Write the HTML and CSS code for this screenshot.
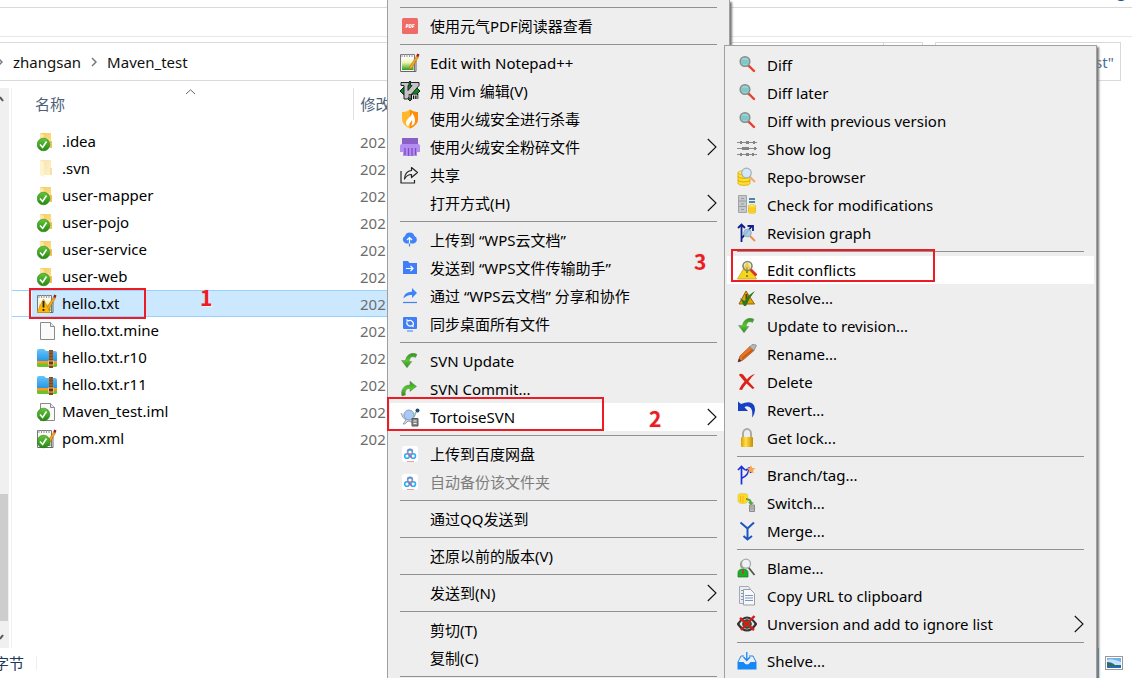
FILE: index.html
```html
<!DOCTYPE html>
<html lang="zh-CN">
<head>
    <meta charset="UTF-8">
    <meta name="viewport" content="width=device-width, initial-scale=1.0">
    <title>Maven_test</title>
    <link rel="stylesheet" href="styles.css">
</head>
<body>
    <!-- 公用图标 -->
    <svg class="sprite" aria-hidden="true">
        <defs>
            <linearGradient id="g-green" x1="0" y1="0" x2="0" y2="1">
                <stop offset="0" stop-color="#63c63c"/><stop offset="1" stop-color="#258a10"/>
            </linearGradient>
            <linearGradient id="g-folder" x1="0" y1="0" x2="1" y2="1">
                <stop offset="0" stop-color="#f0cb62"/><stop offset="1" stop-color="#ffe28e"/>
            </linearGradient>
            <linearGradient id="g-zip" x1="0" y1="0" x2="0" y2="1">
                <stop offset="0" stop-color="#64c6fa"/><stop offset="1" stop-color="#1e8fe0"/>
            </linearGradient>
            <linearGradient id="g-arrow" x1="0" y1="0" x2="0" y2="1">
                <stop offset="0" stop-color="#2f9a18"/><stop offset="0.5" stop-color="#4fcb2a"/><stop offset="1" stop-color="#2f8a1c"/>
            </linearGradient>
            <linearGradient id="g-note" x1="0" y1="0" x2="0" y2="1">
                <stop offset="0" stop-color="#ffffff"/><stop offset="0.4" stop-color="#eef5b0"/><stop offset="1" stop-color="#2d9d1c"/>
            </linearGradient>
            <linearGradient id="g-gold" x1="0" y1="0" x2="1" y2="0">
                <stop offset="0" stop-color="#d99e00"/><stop offset="0.4" stop-color="#ffe04a"/><stop offset="1" stop-color="#c98c00"/>
            </linearGradient>
        </defs>
        <symbol id="i-check" viewBox="0 0 20 20">
            <circle cx="6.500" cy="12.500" r="6.300" fill="url(#g-green)" stroke="#2a7d18" stroke-width="0.600"/>
            <path d="M3 12.500l2.600 3L9.500 9.500" fill="none" stroke="#fff" stroke-width="1.600"/>
        </symbol>
        <symbol id="i-folder" viewBox="0 0 20 20">
            <path d="M3 1h11v15H3z" fill="url(#g-folder)"/>
            <path d="M3 1l4 2v15l-4-2z" fill="#ffe79f"/>
            <path d="M13 9h2v7h-2z" fill="#e8c25a"/>
        </symbol>
        <symbol id="i-page" viewBox="0 0 20 20">
            <path d="M3.500 1.500h10l4 4v13h-14z" fill="#fafafa" stroke="#8a8a8a"/>
            <path d="M13.500 1.500v4h4" fill="#ececec" stroke="#8a8a8a"/>
        </symbol>
        <symbol id="i-zip" viewBox="0 0 20 20">
            <path d="M0 3q0-2 2-2h5l2 2h9q2 0 2 2v10H0z" fill="url(#g-zip)"/>
            <path d="M0 13h20v3H0z" fill="#ff9a1f"/>
            <path d="M0 15.500h20v2q0 1.500-1.500 1.500h-17Q0 19 0 17.500z" fill="#6cc22b"/>
            <path d="M12 2h4v18h-4z" fill="#8a4616"/>
            <path d="M12 4h4M12 7h4M12 10h4" stroke="#b56a2b"/>
            <rect x="11.500" y="13" width="5" height="4" fill="#6d3510" stroke="#f2c27a"/>
        </symbol>
        <symbol id="i-notepad" viewBox="0 0 20 20">
            <path d="M0.500 1.500h14v17H0.500z" fill="#f4f4f4" stroke="#777"/>
            <path d="M2 4.500h11.500V17H2z" fill="url(#g-note)"/>
            <path d="M2 1v3M4.500 1v3M7 1v3M9.500 1v3M12 1v3" stroke="#999"/>
            <path d="M16.500 3l2 1-6.500 11-2.500 1.500.3-2.800z" fill="#f6a81c" stroke="#a86708" stroke-width="0.500"/>
            <path d="M17.200 0.500l2.300 1-1 2.500-2.200-1z" fill="#9e1c1c"/>
            <path d="M1 18.500h15V8" fill="none" stroke="#666"/>
        </symbol>
        <symbol id="i-warn" viewBox="0 0 20 20">
            <path d="M6.500 5L13 18.500H0z" fill="#ffb70a" stroke="#e88b00" stroke-width="0.700"/>
            <path d="M6.500 7v6.500M6.500 15v2" stroke="#222" stroke-width="1.800"/>
        </symbol>
        <symbol id="i-diff" viewBox="0 0 20 20">
            <path d="M12 11l5 5" stroke="#f03c28" stroke-width="2.400" stroke-linecap="round"/>
            <path d="M10 10l2 2" stroke="#777" stroke-width="1.500"/>
            <circle cx="8" cy="6.500" r="4.800" fill="#8fd5d3" stroke="#8b8b8b" stroke-width="1.500"/>
            <path d="M4.500 6h7M4.500 8h7" stroke="#6fb3b1" stroke-width="0.800"/>
        </symbol>
        <symbol id="i-update" viewBox="0 0 20 20">
            <path d="M17 3.500C13.500 1 6.500 2.500 5.500 9.500H1.500L7 16.800l4.800-6.300H9.200C9.500 6.500 12 4.500 15.500 6.500z" fill="url(#g-arrow)" stroke="#777" stroke-width="0.500"/>
        </symbol>
        <symbol id="i-commit" viewBox="0 0 20 20">
            <path d="M2 17c-1.500-5 1-11 8-11V2.200l6.500 5.200-6.500 5V9.500C6.500 9 4.500 12 5.500 16z" fill="url(#g-arrow)" stroke="#777" stroke-width="0.500"/>
        </symbol>
        <symbol id="i-baidu" viewBox="0 0 20 20">
            <rect x="2" y="2" width="16" height="16" rx="3" fill="#fff"/>
            <circle cx="10" cy="7.800" r="2.400" fill="none" stroke="#f0708a" stroke-width="1.600"/>
            <path d="M7.600 7.400A2.500 2.500 0 0 1 12.400 7.400" fill="none" stroke="#2ba8ee" stroke-width="1.600"/>
            <circle cx="7" cy="12" r="2.300" fill="none" stroke="#25b1f5" stroke-width="1.600"/>
            <circle cx="13.200" cy="12" r="2.300" fill="none" stroke="#25b1f5" stroke-width="1.600"/>
            <path d="M8.800 10.400l2.600 3" stroke="#e0507a" stroke-width="1.500"/>
            <path d="M7 17.500h7" stroke="#f59aa5"/>
        </symbol>
        <symbol id="i-db" viewBox="0 0 10 12">
            <path d="M0.500 2v8c0 2 9 2 9 0V2z" fill="#ffe02e" stroke="#d9a400" stroke-width="0.600"/>
            <ellipse cx="5" cy="2" rx="4.500" ry="1.500" fill="#fff07a" stroke="#d9a400" stroke-width="0.600"/>
            <path d="M0.500 4.700c0 2 9 2 9 0M0.500 7.400c0 2 9 2 9 0" fill="none" stroke="#d9a400" stroke-width="0.700"/>
        </symbol>
        <symbol id="i-more" viewBox="0 0 10 18">
            <path d="M0.800 1L9 9l-8.200 8" fill="none" stroke="#111" stroke-width="1.100"/>
        </symbol>
    </svg>

    <div class="explorer">
        <div class="titlebar"><span class="help-dot"></span></div>
        <div class="ribbon"></div>

        <div class="toolbar">
            <nav class="address">
                <svg class="crumb-arrow" viewBox="0 0 6 10"><path d="M1 1l4 4-4 4" fill="none" stroke="#777" stroke-width="1.500"/></svg>
                <a href="#">zhangsan</a>
                <svg class="crumb-arrow" viewBox="0 0 6 10"><path d="M1 1l4 4-4 4" fill="none" stroke="#777" stroke-width="1.500"/></svg>
                <a href="#">Maven_test</a>
                <span class="address-drop"></span>
            </nav>
            <input class="search" type="text" aria-label="搜索" value='st"'>
        </div>

        <main class="content">
            <div class="scrollbar">
                <svg class="scroll-arrow" viewBox="0 0 4 6"><path d="M0 1l3 4" stroke="#555" stroke-width="2"/></svg>
                <span class="scroll-thumb"></span>
                <svg class="scroll-arrow" viewBox="0 0 4 6"><path d="M0 5l3-4" stroke="#555" stroke-width="2"/></svg>
            </div>
            <div class="files">
                <svg class="sort-mark" viewBox="0 0 10 6"><path d="M0.500 5L5 0.800 9.500 5" fill="none" stroke="#666"/></svg>
                <table>
                    <thead>
                        <tr><th class="name">名称</th><th class="date">修改</th></tr>
                    </thead>
                    <tbody>
                        <tr><td class="name"><svg class="icon"><use href="#i-folder"/><use href="#i-check"/></svg>.idea</td><td>202</td></tr>
                        <tr><td class="name"><svg class="icon faded"><use href="#i-folder"/></svg>.svn</td><td>202</td></tr>
                        <tr><td class="name"><svg class="icon"><use href="#i-folder"/><use href="#i-check"/></svg>user-mapper</td><td>202</td></tr>
                        <tr><td class="name"><svg class="icon"><use href="#i-folder"/><use href="#i-check"/></svg>user-pojo</td><td>202</td></tr>
                        <tr><td class="name"><svg class="icon"><use href="#i-folder"/><use href="#i-check"/></svg>user-service</td><td>202</td></tr>
                        <tr><td class="name"><svg class="icon"><use href="#i-folder"/><use href="#i-check"/></svg>user-web</td><td>202</td></tr>
                        <tr class="selected"><td class="name"><svg class="icon"><use href="#i-notepad"/><use href="#i-warn"/></svg>hello.txt</td><td>202</td></tr>
                        <tr><td class="name"><svg class="icon"><use href="#i-page"/></svg>hello.txt.mine</td><td>202</td></tr>
                        <tr><td class="name"><svg class="icon"><use href="#i-zip"/></svg>hello.txt.r10</td><td>202</td></tr>
                        <tr><td class="name"><svg class="icon"><use href="#i-zip"/></svg>hello.txt.r11</td><td>202</td></tr>
                        <tr><td class="name"><svg class="icon"><use href="#i-page"/><use href="#i-check"/></svg>Maven_test.iml</td><td>202</td></tr>
                        <tr><td class="name"><svg class="icon"><use href="#i-notepad"/><use href="#i-check"/></svg>pom.xml</td><td>202</td></tr>
                    </tbody>
                </table>
            </div>
        </main>

        <footer class="statusbar">
            <span class="size">字节</span>
            <span class="view-details"></span>
            <svg class="view-thumb" viewBox="0 0 18 14">
                <rect x="0.500" y="0.500" width="17" height="13" fill="#fff" stroke="#999"/>
                <path d="M2 2h14v10H2z" fill="#6fb0ee"/>
                <path d="M2 4q4-2 14 2v3H2z" fill="#c6e2fa"/>
                <path d="M2 6q5 0 8 3h6v3H2z" fill="#2d6b6d"/>
                <path d="M2 10h14v2H2z" fill="#2568b4"/>
            </svg>
        </footer>
    </div>

    <!-- 右键菜单 -->
    <ul class="menu context-menu">
        <li class="separator"></li>
        <li><button><svg class="icon" viewBox="0 0 20 20"><rect x="2" y="2" width="16" height="16" rx="1.500" fill="#ee6b67"/><text x="10" y="12" class="pdf-mark">PDF</text></svg>使用元气PDF阅读器查看</button></li>
        <li class="separator"></li>
        <li><button><svg class="icon"><use href="#i-notepad"/></svg>Edit with Notepad++</button></li>
        <li><button><svg class="icon" viewBox="0 0 20 20">
            <path d="M10 0l10 10-10 10L0 10z" fill="#0a8a1a" stroke="#123"/>
            <path d="M1 1.500h8v3H8v5l4-5h-1.500v-3H19v3L7.500 18H4V4.500H1z" fill="#c4c4c4" stroke="#222"/>
            <path d="M10 13v5M12.500 18v-4l2 0v4m0-4h2.500v4" fill="none" stroke="#111" stroke-width="2.600"/>
            <path d="M10 13.500v4M12.500 18v-4h4.500v4M14.700 14v4" fill="none" stroke="#ddd"/>
        </svg>用 Vim 编辑(V)</button></li>
        <li><button><svg class="icon" viewBox="0 0 20 20">
            <path d="M10 0.500q4 3 8 2.500v7q0 6-8 9.500-8-3.500-8-9.500V3q4 .5 8-2.500z" fill="#ffb82b"/>
            <path d="M10 0.500q4 3 8 2.500v7q0 6-8 9.500z" fill="#ff8d0a"/>
            <path d="M12 3.500c.5 4-6 6-6 10.500 0 1.500 1 3 2.500 3.500-.3-3 3-3.500 3-6.500 1.500 2 .5 4-.5 6 5-1.500 5.500-7 1-13.500z" fill="#fff"/>
        </svg>使用火绒安全进行杀毒</button></li>
        <li><button><svg class="icon" viewBox="0 0 20 20">
            <path d="M2 1h16v7H2z" fill="#8a60c8"/>
            <path d="M2 7h16q2 0 2 2v6H0V9q0-2 2-2z" fill="#b48df0"/>
            <path d="M3 10h14v9H3z" fill="#b48df0"/>
            <path d="M5 11v7M8.500 11v8M12 11v8M15.500 11v7" stroke="#7c4fc0" stroke-width="1.300"/>
        </svg>使用火绒安全粉碎文件<svg class="more"><use href="#i-more"/></svg></button></li>
        <li><button><svg class="icon" viewBox="0 0 20 20"><path d="M1 6v12h13.500v-3M11.500 2.500l6 5-6 5V9.500q-4.500 0-7 4.500.5-8 7-8.500z" fill="none" stroke="#222" stroke-width="1.200" stroke-linejoin="round"/></svg>共享</button></li>
        <li><button><span class="icon"></span>打开方式(H)<svg class="more"><use href="#i-more"/></svg></button></li>
        <li class="separator"></li>
        <li><button><svg class="icon" viewBox="0 0 20 20"><path d="M6 13.500a4 4 0 0 1-1-7.500 5 5 0 0 1 9.500 0 4 4 0 0 1-.5 7.500z" fill="#3f83f8"/><path d="M9.500 14V8M7 10l2.500-2.500L12 10" fill="none" stroke="#fff" stroke-width="1.200"/><path d="M9.500 13.500v3" stroke="#3f83f8" stroke-width="1.200"/></svg>上传到 “WPS云文档”</button></li>
        <li><button><svg class="icon" viewBox="0 0 20 20"><path d="M3 3h5l1.500 2H17v11H3z" fill="#3f7ef7"/><path d="M6 10.500h7M10.500 8l2.500 2.500-2.500 2.500" fill="none" stroke="#fff" stroke-width="1.200"/></svg>发送到 “WPS文件传输助手”</button></li>
        <li><button><svg class="icon" viewBox="0 0 20 20"><path d="M3.500 12.500q.5-6.500 8.500-7V2l5 5-5 5V9q-5-.5-8.500 3.500z" fill="#3f83f8"/><path d="M3 16.500h14" stroke="#3f83f8" stroke-width="1.200"/></svg>通过 “WPS云文档” 分享和协作</button></li>
        <li><button><svg class="icon" viewBox="0 0 20 20"><rect x="3" y="3" width="14" height="12" rx="1" fill="#3f7ef7"/><path d="M7 17h6" stroke="#3f7ef7"/><path d="M6.500 5.500L8 7a3.500 3.500 0 0 1 5 4.500M6.900 7.500A3.500 3.500 0 0 0 12 11.500l1.500 1.500" fill="none" stroke="#fff" stroke-width="1.200"/></svg>同步桌面所有文件</button></li>
        <li class="separator"></li>
        <li><button><svg class="icon"><use href="#i-update"/></svg>SVN Update</button></li>
        <li><button><svg class="icon"><use href="#i-commit"/></svg>SVN Commit...</button></li>
        <li><button class="active"><svg class="icon" viewBox="0 0 20 20">
            <path d="M1 6q1 5 5 7l-3 4h2l3-3 6 2 2-5" fill="#d3dbe4" stroke="#8292a3" stroke-width="0.800"/>
            <circle cx="9" cy="8" r="5" fill="#a9c8f5" stroke="#7893c0" stroke-width="0.800"/>
            <path d="M14 10l2-5" stroke="#8ba" stroke-width="1.500"/>
            <circle cx="17.500" cy="3.500" r="2" fill="#244a70"/>
            <path d="M12 11.500h6v7.500h-6z" fill="#888" stroke="#555"/>
            <path d="M13.500 14h3M13.500 16.500h3" stroke="#eee"/>
        </svg>TortoiseSVN<svg class="more"><use href="#i-more"/></svg></button></li>
        <li class="separator"></li>
        <li><button><svg class="icon"><use href="#i-baidu"/></svg>上传到百度网盘</button></li>
        <li><button disabled><svg class="icon"><use href="#i-baidu"/></svg>自动备份该文件夹</button></li>
        <li class="separator"></li>
        <li><button><span class="icon"></span>通过QQ发送到</button></li>
        <li class="separator"></li>
        <li><button><span class="icon"></span>还原以前的版本(V)</button></li>
        <li class="separator"></li>
        <li><button><span class="icon"></span>发送到(N)<svg class="more"><use href="#i-more"/></svg></button></li>
        <li class="separator"></li>
        <li><button><span class="icon"></span>剪切(T)</button></li>
        <li><button><span class="icon"></span>复制(C)</button></li>
        <li class="separator"></li>
    </ul>

    <!-- TortoiseSVN 子菜单 -->
    <ul class="menu submenu">
        <li><button><svg class="icon"><use href="#i-diff"/></svg>Diff</button></li>
        <li><button><svg class="icon"><use href="#i-diff"/></svg>Diff later</button></li>
        <li><button><svg class="icon"><use href="#i-diff"/></svg>Diff with previous version</button></li>
        <li><button><svg class="icon" viewBox="0 0 20 20">
            <path d="M0 3.500h20M0 9.500h20M0 15.500h20" stroke="#8b8b8b"/>
            <path d="M3 3.500h2M9 3.500h3M16 3.500h2M5 9.500h7M17 9.500h2M3 15.500h2M9 15.500h3M15 15.500h2" stroke="#858585" stroke-width="3"/>
        </svg>Show log</button></li>
        <li><button><svg class="icon" viewBox="0 0 20 20">
            <use href="#i-db" x="0" y="3" width="14" height="16"/>
            <path d="M12 9l6 6" stroke="#e8ad78" stroke-width="2.200"/>
            <circle cx="9.500" cy="6" r="4.800" fill="#d4e8fa" stroke="#a5afb8" stroke-width="1.200"/>
        </svg>Repo-browser</button></li>
        <li><button><svg class="icon" viewBox="0 0 20 20">
            <path d="M1.500 0.500h8v17h-8z" fill="#c4c8ca" stroke="#a0a4a6"/>
            <path d="M2 6h7M2 11.500h7M4 3.500h3M4 9h3M4 14.500h3" stroke="#959b9e"/>
            <path d="M12 4h6M12 7h6" stroke="#17648c" stroke-width="1.600"/>
            <use href="#i-db" x="11" y="9" width="8" height="10"/>
        </svg>Check for modifications</button></li>
        <li><button><svg class="icon" viewBox="0 0 20 20">
            <path d="M4.500 19V2M1 5l3.500-3.500L8 5M5 15l10-12M10.500 3H16v5" fill="none" stroke="#10208c" stroke-width="1.800"/>
            <path d="M13 13l5 5" stroke="#f08c45" stroke-width="2"/>
            <circle cx="10.500" cy="10" r="3.800" fill="#9cc9ec" fill-opacity="0.900" stroke="#9aa"/>
        </svg>Revision graph</button></li>
        <li class="separator"></li>
        <li><button class="active"><svg class="icon" viewBox="0 0 20 20">
            <path d="M10 3l9.500 16H0.500z" fill="#f6d51c" stroke="#c9a514" stroke-width="0.800"/>
            <path d="M10 7v6M10 15v2" stroke="#8a7d20" stroke-width="1.800"/>
            <path d="M13.500 9.500l6 6" stroke="#e0302a" stroke-width="2.800"/>
            <circle cx="10.500" cy="6" r="4.500" fill="#e6db7a" fill-opacity="0.500" stroke="#858570" stroke-width="1.600"/>
        </svg>Edit conflicts</button></li>
        <li><button><svg class="icon" viewBox="0 0 20 20">
            <path d="M9 3l8.500 13H2z" fill="#e9a30a" stroke="#8c660e"/>
            <path d="M9.500 6v5" stroke="#5c3d08" stroke-width="2"/>
            <path d="M3 10l4.500 3Q11 7 18 3 12 10 9 18H7z" fill="#2d7a1c"/>
        </svg>Resolve...</button></li>
        <li><button><svg class="icon"><use href="#i-update"/></svg>Update to revision...</button></li>
        <li><button><svg class="icon" viewBox="0 0 20 20">
            <path d="M1 18l2-6L13 2.500l4 4L6 16z" fill="#ee7424" stroke="#a04c14" stroke-width="0.700"/>
            <path d="M5 14.500L16 5.500" stroke="#b85a14" stroke-width="1.600"/>
            <path d="M12.500 3l2.500-2.500q3-1 4.500 1L17 6.500z" fill="#b5b5b5" stroke="#777" stroke-width="0.600"/>
            <path d="M1 18l1-3.500L4.500 17z" fill="#335"/>
        </svg>Rename...</button></li>
        <li><button><svg class="icon" viewBox="0 0 20 20">
            <path d="M2 3q1-2 4-.5l4 5Q13 3 18 2q-4 3-6.500 7.500L17.500 16l-2 1-6-5.500Q6.500 15 5 18l-3-.5Q4 13 7.500 9.500z" fill="#dd2317"/>
        </svg>Delete</button></li>
        <li><button><svg class="icon" viewBox="0 0 20 20">
            <path d="M1 1.500l3 2.500Q17-1 18 9q0 5-3 8.500 1.500-10-4-11-2-.5-3.500.8L11 11H1z" fill="#173fc4"/>
        </svg>Revert...</button></li>
        <li><button><svg class="icon" viewBox="0 0 20 20">
            <path d="M6 10V5.500a4 4.500 0 0 1 8 0V10" fill="none" stroke="#aaa" stroke-width="2"/>
            <rect x="4" y="9" width="12" height="10" rx="1" fill="url(#g-gold)"/>
        </svg>Get lock...</button></li>
        <li class="separator"></li>
        <li><button><svg class="icon" viewBox="0 0 20 20">
            <path d="M4.500 19.500V2M1 5l3.500-3.500L8 5M5 13q6-2 7-9M8.500 5.500L12 3l2 5" fill="none" stroke="#1c2fe0" stroke-width="1.700"/>
            <path d="M14 0l1.200 3 3.300.3-2.500 2 .8 3.200L14 6.800l-2.800 1.700.8-3.200-2.500-2 3.300-.3z" fill="#f7a64a"/>
        </svg>Branch/tag...</button></li>
        <li><button><svg class="icon" viewBox="0 0 20 20">
            <path d="M1 2q0-1.500 5-1.500T10.500 2v6.500Q10 10.500 6 10.500T1 8.500z" fill="#ffdc1a" stroke="#d9c56a" stroke-width="0.700"/>
            <path d="M3.500 3v6M6 3v7" stroke="#ffac2e"/>
            <path d="M9 6q5 0 5 5" fill="none" stroke="#55a53a" stroke-width="2.200"/>
            <path d="M11 9l6 .5-3 3z" fill="#55a53a"/>
            <path d="M12.500 12h5v6.500h-5z" fill="#c2c2c2" stroke="#8b8b8b"/>
            <path d="M13 14h4M13 16h4" stroke="#888" stroke-width="0.700"/>
        </svg>Switch...</button></li>
        <li><button><svg class="icon" viewBox="0 0 20 20">
            <path d="M3.500 1.500l7 6v10.500M17 1.500l-6.500 6M6.500 15l4 3.500 4.500-3.500" fill="none" stroke="#1d56c0" stroke-width="2"/>
        </svg>Merge...</button></li>
        <li class="separator"></li>
        <li><button><svg class="icon" viewBox="0 0 20 20">
            <path d="M1 19v-4q0-4 5-4t5 4v4z" fill="#1fae28" stroke="#137a18" stroke-width="0.700"/>
            <path d="M6 12v4" stroke="#c33" stroke-width="1.500"/>
            <path d="M3 6.500Q3 2 7 2v9q-4-.5-4-4.500z" fill="#8f9b7f"/>
            <path d="M11.500 9.500l6 7.500" stroke="#555" stroke-width="1.800"/>
            <circle cx="9" cy="5.700" r="4.500" fill="#f0f2f3" stroke="#a3a9ad" stroke-width="1.300"/>
        </svg>Blame...</button></li>
        <li><button><svg class="icon" viewBox="0 0 20 20">
            <path d="M2.500 0.500h9l2 3v14h-11z" fill="#e9ecf0" stroke="#a5aab1"/>
            <path d="M6.500 3.500h7l4 4v11.500h-11z" fill="#f8f9fb" stroke="#999fa8"/>
            <path d="M4 4.500h2M4 7.500h2M4 10.500h2M4 13.500h2M8 9.500h8M8 12h8M8 14.500h8" stroke="#7c96c4"/>
        </svg>Copy URL to clipboard</button></li>
        <li><button><svg class="icon" viewBox="0 0 20 20">
            <path d="M1 10q9-13 18 0-9 13-18 0z" fill="#e8e8e8" stroke="#333" stroke-width="2.200"/>
            <circle cx="10" cy="10" r="4.200" fill="#2c7d35" stroke="#222"/>
            <path d="M3 4l14 12M17.500 2L4 16" stroke="#d41c1c" stroke-width="2.500"/>
        </svg>Unversion and add to ignore list<svg class="more"><use href="#i-more"/></svg></button></li>
        <li class="separator"></li>
        <li><button><svg class="icon" viewBox="0 0 20 20">
            <path d="M1 11l3-6h3M12 5h4l3 6" fill="none" stroke="#1e86f0"/>
            <path d="M0.500 11h6q3.500 5 7 0h6v7.500H0.500z" fill="#1787f5"/>
            <path d="M9.800 1v8M6.500 6l3.300 3.500L13 6" fill="none" stroke="#1787f5" stroke-width="1.300"/>
        </svg>Shelve...</button></li>
    </ul>

    <!-- 步骤标注 -->
    <span class="frame frame-1"></span>
    <span class="frame frame-2"></span>
    <span class="frame frame-3"></span>
    <strong class="step step-1">1</strong>
    <strong class="step step-2">2</strong>
    <strong class="step step-3">3</strong>
</body>
</html>
```

FILE: styles.css
```css
* {
    box-sizing: border-box;
}

body {
    margin: 0;
    height: 100vh;
    position: relative;
    overflow: hidden;
    background: #fff;
    color: #000;
    font-family: "Noto Sans", "Noto Sans CJK SC", sans-serif;
    font-size: 15px;
    line-height: 20px;
}

button,
input {
    font: inherit;
}

.sprite {
    position: absolute;
    width: 0;
    height: 0;
}

.icon {
    flex: none;
    width: 20px;
    height: 20px;
}

/* 资源管理器窗口 */
.explorer {
    height: 100%;
    display: flex;
    flex-direction: column;
}

.titlebar {
    position: relative;
    height: 8px;
    border-bottom: 1px solid #d9d9d9;
}

.help-dot {
    position: absolute;
    top: -13px;
    right: 4px;
    width: 14px;
    height: 14px;
    border-radius: 50%;
    background: #0f4a8a;
}

.ribbon {
    height: 29px;
    border-bottom: 1px solid #e8e8e8;
}

.toolbar {
    display: flex;
    gap: 12px;
    padding: 5px 11px 7px 0;
}

.address {
    flex: 1;
    display: flex;
    align-items: center;
    gap: 10px;
    height: 39px;
    border: 1px solid #d9d9d9;
    border-left: 0;
}

.address a {
    color: #111;
    text-decoration: none;
}

.crumb-arrow {
    width: 6px;
    height: 10px;
}

.crumb-arrow:first-child {
    margin-left: -3px;
}

.address-drop {
    align-self: stretch;
    width: 39px;
    margin-left: auto;
    border-left: 1px solid #d9d9d9;
}

.search {
    width: 186px;
    padding: 0 6px;
    border: 1px solid #d9d9d9;
    border-radius: 0;
    background: #fff;
    color: #4a6f98;
    text-align: right;
}

.content {
    flex: 1;
    display: flex;
    min-height: 0;
}

.scrollbar {
    width: 9px;
    display: flex;
    flex-direction: column;
    padding: 8px 0;
    background: #f0f0f0;
}

.scroll-arrow {
    width: 4px;
    height: 6px;
}

.scroll-thumb {
    width: 8px;
    height: 127px;
    margin: auto 0 13px;
    background: #cdcdcd;
}

.files {
    position: relative;
    flex: 1;
    margin-left: 2px;
    border-left: 1px solid #f0f0f0;
}

.sort-mark {
    position: absolute;
    top: 1px;
    left: 173px;
    width: 11px;
    height: 6px;
}

table {
    width: 720px;
    border-collapse: collapse;
    table-layout: fixed;
}

th,
td {
    padding: 0 0 0 7px;
    text-align: left;
    font-weight: normal;
}

th {
    height: 32px;
    color: #4c607a;
}

th.name {
    width: 341px;
    padding-left: 23px;
    border-right: 1px solid #e0e0e0;
}

thead::after {
    content: "";
    display: block;
    height: 8px;
}

td {
    height: 27px;
    color: #6d6d6d;
}

td.name {
    padding-left: 25px;
    color: #000;
}

td .icon {
    margin-right: 5px;
    vertical-align: -5px;
}

.faded {
    opacity: 0.5;
}

.selected {
    background: linear-gradient(#cce8ff, #cce8ff) 20px 0 no-repeat;
    box-shadow: inset 0 1px #99d1ff, inset 0 -1px #99d1ff;
}

.statusbar {
    display: flex;
    align-items: center;
    height: 30px;
    padding-right: 9px;
}

.size {
    height: 14px;
    width: 43px;
    margin-left: -6px;
    line-height: 14px;
    color: #1e395b;
    border-right: 1px solid #eee;
}

.view-details {
    align-self: stretch;
    width: 30px;
    margin-left: auto;
    margin-right: 6px;
    border: 1px solid #26a0da;
    background: #cbe8f6;
}

.view-thumb {
    width: 18px;
    height: 14px;
}

/* 菜单 */
.menu {
    position: absolute;
    bottom: 0;
    margin: 0;
    list-style: none;
    background: #eee;
    border: 1px solid #a0a0a0;
    border-bottom: 0;
    box-shadow: 2px 2px 2px #777;
    overflow: hidden;
}

.context-menu {
    top: 0;
    left: 387px;
    width: 343px;
    padding: 3px 2px 0;
    border-top: 0;
}

.submenu {
    top: 45px;
    left: 724px;
    width: 373px;
    padding: 5px 2px 0;
}

.separator {
    height: 1px;
    margin: 4px 10px;
    background: #919191;
}

.menu button {
    display: flex;
    align-items: center;
    width: 100%;
    height: 28px;
    padding: 0 10px;
    border: 0;
    background: none;
    color: #000;
    text-align: left;
    white-space: pre;
}

.menu button .icon {
    margin-right: 10px;
}

.menu button.active {
    background: #fff;
}

.menu button:disabled {
    color: #7d7d7d;
}

.more {
    width: 10px;
    height: 18px;
    margin-left: auto;
}

.pdf-mark {
    fill: #fff;
    font-size: 5px;
    font-weight: 800;
    font-style: italic;
    text-anchor: middle;
}

/* 红色标注 */
.frame {
    position: absolute;
    border: 2px solid #ed1c24;
}

.frame-1 {
    top: 288px;
    left: 29px;
    width: 117px;
    height: 31px;
}

.frame-2 {
    top: 397px;
    left: 387px;
    width: 217px;
    height: 34px;
}

.frame-3 {
    top: 249px;
    left: 731px;
    width: 204px;
    height: 33px;
}

.step {
    position: absolute;
    color: #ed1c24;
    font-family: "Noto Sans CJK SC", sans-serif;
    font-size: 21px;
    line-height: 24px;
    text-shadow: 0 0 2px #ccc, 1px 1px 1px #fff;
}

.step-1 {
    top: 285px;
    left: 200px;
}

.step-2 {
    top: 406px;
    left: 649px;
}

.step-3 {
    top: 249px;
    left: 694px;
}
```
